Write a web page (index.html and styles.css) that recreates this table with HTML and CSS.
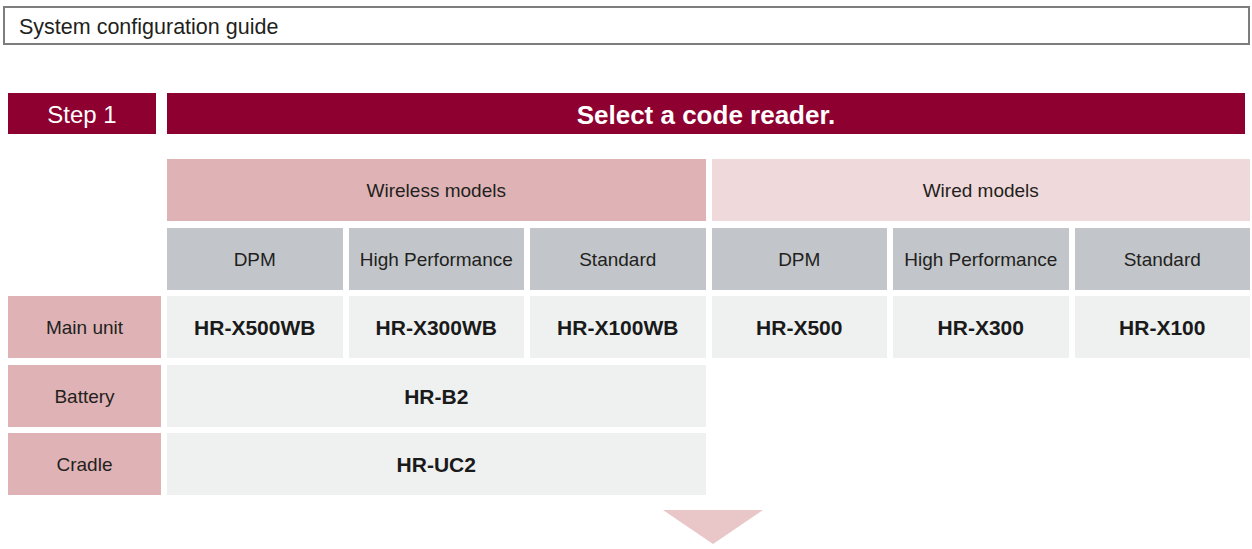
FILE: index.html
```html
<!DOCTYPE html>
<html>
<head>
<meta charset="utf-8">
<link rel="stylesheet" href="styles.css">
</head>
<body>
<div class="page">
  <div class="guide">System configuration guide</div>
  <div class="step-row">
    <div class="step">Step 1</div>
    <div class="step-title">Select a code reader.</div>
  </div>
  <div class="grid">
    <div class="blank"></div>
    <div class="cell group wireless">Wireless models</div>
    <div class="cell group wired">Wired models</div>

    <div class="blank"></div>
    <div class="cell sub">DPM</div>
    <div class="cell sub">High Performance</div>
    <div class="cell sub">Standard</div>
    <div class="cell sub">DPM</div>
    <div class="cell sub">High Performance</div>
    <div class="cell sub">Standard</div>

    <div class="cell label">Main unit</div>
    <div class="cell data">HR-X500WB</div>
    <div class="cell data">HR-X300WB</div>
    <div class="cell data">HR-X100WB</div>
    <div class="cell data">HR-X500</div>
    <div class="cell data">HR-X300</div>
    <div class="cell data">HR-X100</div>

    <div class="cell label">Battery</div>
    <div class="cell data span3">HR-B2</div>
    <div class="empty"></div>

    <div class="cell label">Cradle</div>
    <div class="cell data span3">HR-UC2</div>
    <div class="empty"></div>
  </div>
  <div class="arrow-row">
    <div class="arrow"></div>
  </div>
</div>
</body>
</html>
```
FILE: styles.css
```css
html, body {
  margin: 0;
  padding: 0;
  background: #ffffff;
}
body {
  font-family: "Liberation Sans", Arial, sans-serif;
  color: #231f20;
}
.page {
  width: 1252px;
  height: 549px;
  overflow: hidden;
  padding-top: 6px;
  box-sizing: border-box;
}
.guide {
  margin-left: 3px;
  width: 1247px;
  height: 39px;
  box-sizing: border-box;
  border: 2px solid #7d7d7d;
  padding-left: 14px;
  font-size: 21.5px;
  line-height: 38px;
  color: #231f20;
}
.step-row {
  display: flex;
  margin-top: 48px;
  margin-left: 8px;
  height: 41px;
}
.step {
  width: 148px;
  background: #8e002f;
  color: #ffffff;
  font-size: 24px;
  line-height: 44px;
  text-align: center;
}
.step-title {
  margin-left: 11px;
  width: 1078px;
  background: #8e002f;
  color: #ffffff;
  font-size: 26px;
  font-weight: bold;
  line-height: 44px;
  text-align: center;
}
.grid {
  display: grid;
  margin-top: 25px;
  margin-left: 8px;
  grid-template-columns: 153px repeat(6, 175.5px);
  grid-template-rows: 62px 62px 62px 62px 62px;
  column-gap: 6px;
  row-gap: 6.5px;
}
.cell {
  display: flex;
  align-items: center;
  justify-content: center;
  font-size: 19px;
  color: #231f20;
  padding-top: 2px;
  box-sizing: border-box;
}
.group {
  grid-column: span 3;
}
.wireless {
  background: #dfb3b6;
}
.wired {
  background: #f0d9db;
}
.sub {
  background: #c2c6ca;
}
.label {
  background: #dfb3b6;
}
.data {
  background: #eef1f0;
  font-weight: bold;
  font-size: 21px;
  color: #1a1a1a;
}
.span3 {
  grid-column: span 3;
}
.empty {
  grid-column: span 3;
}
.arrow-row {
  display: flex;
  margin-top: 15px;
  padding-left: 663px;
}
.arrow {
  width: 0;
  height: 0;
  border-left: 50px solid transparent;
  border-right: 50px solid transparent;
  border-top: 34px solid #e9c7c8;
}
```
